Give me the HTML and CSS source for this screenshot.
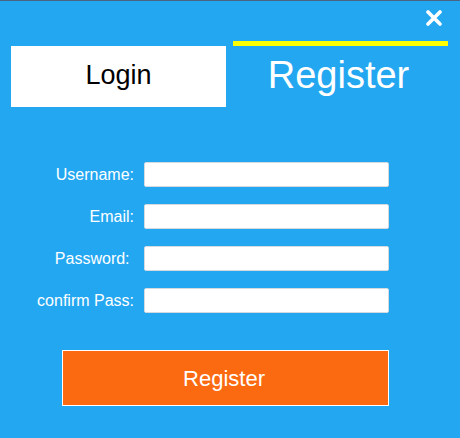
FILE: index.html
```html
<!DOCTYPE html>
<html lang="en">
<head>
<meta charset="utf-8">
<title>Register</title>
<link rel="stylesheet" href="styles.css">
</head>
<body>
<div class="topline"></div>
<div class="close-row">
  <button class="close" aria-label="Close">
    <svg width="16" height="16" viewBox="0 0 16 16"><path d="M2 2 L14 14 M14 2 L2 14" stroke="#fff" stroke-width="3.6" stroke-linecap="round"/></svg>
  </button>
</div>
<div class="tabs">
  <div class="tab tab-login">Login</div>
  <div class="tab tab-register">Register</div>
</div>
<form class="form">
  <label class="label" for="u">Username:</label><input class="input" id="u" type="text">
  <label class="label" for="e">Email:</label><input class="input" id="e" type="text">
  <label class="label" for="p">Password:&nbsp;</label><input class="input" id="p" type="password">
  <label class="label" for="c">confirm Pass:</label><input class="input" id="c" type="password">
</form>
<button class="submit">Register</button>
</body>
</html>
```
FILE: styles.css
```css
html, body {
  margin: 0;
  padding: 0;
}
body {
  width: 460px;
  height: 438px;
  overflow: hidden;
  background: #24a7f1;
  font-family: "Liberation Sans", Arial, sans-serif;
}
.topline {
  height: 1px;
  background: #4a6582;
}
.close-row {
  display: flex;
  justify-content: flex-end;
  padding: 9px 18px 0 0;
}
.close {
  display: block;
  width: 16px;
  height: 16px;
  padding: 0;
  border: 0;
  background: none;
}
.close svg {
  display: block;
}
.tabs {
  display: flex;
  align-items: flex-end;
  gap: 7px;
  margin-top: 15px;
  padding-left: 11px;
}
.tab {
  width: 215px;
  height: 61px;
  display: flex;
  align-items: center;
  justify-content: center;
}
.tab-login {
  background: #fff;
  color: #000;
  font-size: 27px;
  padding-bottom: 3px;
  box-sizing: border-box;
}
.tab-register {
  border-top: 5px solid #ffff00;
  color: #fff;
  font-size: 38px;
  padding: 0 4px 3px 0;
  box-sizing: border-box;
  height: 66px;
}
.form {
  display: grid;
  grid-template-columns: 134px 245px;
  column-gap: 10px;
  row-gap: 17px;
  margin: 55px 0 0 0;
  align-items: center;
}
.label {
  text-align: right;
  color: #fff;
  font-size: 16px;
  white-space: pre;
}
.input {
  box-sizing: border-box;
  height: 25px;
  width: 245px;
  margin: 0;
  border: 1px solid #d3dbe1;
  border-radius: 2px;
  background: #fff;
}
.submit {
  display: flex;
  align-items: center;
  justify-content: center;
  box-sizing: border-box;
  margin: 37px 0 0 62px;
  width: 327px;
  height: 56px;
  border: 1px solid #fff;
  background: #fb6a10;
  color: #fff;
  font-family: "Liberation Sans", Arial, sans-serif;
  font-size: 22px;
  padding: 2px 3px 0 0;
}
```
